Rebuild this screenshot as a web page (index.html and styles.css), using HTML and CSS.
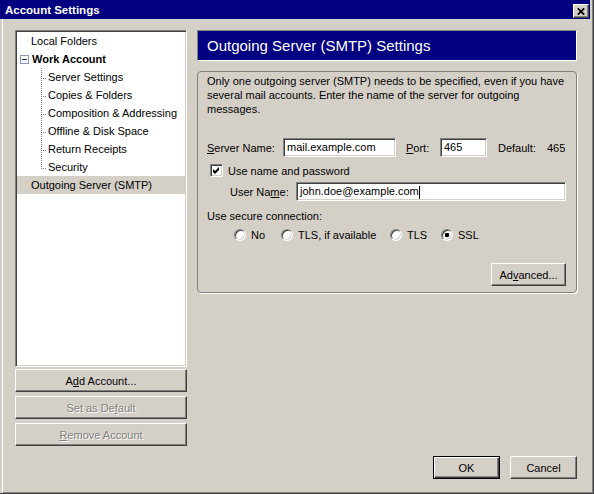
FILE: index.html
```html
<!DOCTYPE html>
<html lang="en">
<head>
	<meta charset="UTF-8">
	<title>Account Settings</title>
	<link rel="stylesheet" href="styles.css">
</head>
<body>
	<div class="window">
		<div class="titlebar">
			<span class="title">Account Settings</span>
			<span class="close"><svg width="8" height="7" viewBox="0 0 8 7"><path d="M0.8 0.3 L7.2 6.7 M7.2 0.3 L0.8 6.7" stroke="#000" stroke-width="1.7" fill="none"/></svg></span>
		</div>
		<div class="client">
			<div class="main">
				<div class="left">
					<div class="tree">
						<div class="node">Local Folders</div>
						<div class="node account"><span class="expander"></span>Work Account</div>
						<div class="children">
							<div class="child">Server Settings</div>
							<div class="child">Copies &amp; Folders</div>
							<div class="child">Composition &amp; Addressing</div>
							<div class="child">Offline &amp; Disk Space</div>
							<div class="child">Return Receipts</div>
							<div class="child last">Security</div>
						</div>
						<div class="node selected">Outgoing Server (SMTP)</div>
					</div>
					<button type="button" class="btn">A<u>d</u>d Account...</button>
					<button type="button" class="btn disabled">Set as De<u>f</u>ault</button>
					<button type="button" class="btn disabled"><u>R</u>emove Account</button>
				</div>
				<div class="right">
					<div class="header">Outgoing Server (SMTP) Settings</div>
					<div class="group">
						<div class="desc">Only one outgoing server (SMTP) needs to be specified, even if you have several mail accounts. Enter the name of the server for outgoing messages.</div>
						<div class="row server-row">
							<span class="lbl-server"><u>S</u>erver Name:</span>
							<span class="field f-server">mail.example.com</span>
							<span class="lbl-port"><u>P</u>ort:</span>
							<span class="field f-port">465</span>
							<span class="lbl-default">Default:</span>
							<span>465</span>
						</div>
						<div class="row check-row">
							<span class="checkbox"><svg width="9" height="9" viewBox="0 0 9 9"><polygon points="1,3 3,5 7,1 7,4 3,8 1,6" fill="#000"/></svg></span>
							<span>Use name and password</span>
						</div>
						<div class="row user-row">
							<span class="lbl-user">User Na<u>m</u>e:</span>
							<span class="field f-user">john.doe@example.com<span class="caret"></span></span>
						</div>
						<div class="secure">Use secure connection:</div>
						<div class="row radio-row">
							<span class="opt opt-no"><span class="radio"></span>No</span>
							<span class="opt opt-tlsa"><span class="radio"></span>TLS, if available</span>
							<span class="opt opt-tls"><span class="radio"></span>TLS</span>
							<span class="opt"><span class="radio on"></span>SSL</span>
						</div>
						<div class="row adv-row">
							<button type="button" class="btn adv">Ad<u>v</u>anced...</button>
						</div>
					</div>
				</div>
			</div>
			<div class="footer">
				<button type="button" class="btn ok">OK</button>
				<button type="button" class="btn">Cancel</button>
			</div>
		</div>
	</div>
</body>
</html>
```

FILE: styles.css
```css
body{margin:0;font-family:"Liberation Sans",Arial,sans-serif;font-size:11px;color:#000;}
u{text-decoration:underline;text-underline-offset:1px;}

.window{width:594px;height:494px;box-sizing:border-box;background:#d4d0c8;border-right:1px solid #404040;border-bottom:1px solid #404040;box-shadow:inset -1px -1px #808080;display:flex;flex-direction:column;}

.titlebar{height:19px;margin-right:3px;background:#000080;color:#fff;display:flex;justify-content:space-between;align-items:flex-start;padding:0 1px 0 5px;}
.titlebar .title{font-weight:bold;font-size:11.5px;line-height:21px;}
.titlebar .close{margin-top:4px;width:16px;height:14px;box-sizing:border-box;background:#d4d0c8;border:1px solid;border-color:#fff #404040 #404040 #fff;box-shadow:inset -1px -1px #808080;display:flex;align-items:center;justify-content:center;}

.client{flex:1;display:flex;flex-direction:column;padding:11px 16px 14px 15px;box-shadow:inset 2px 0 #d4d0c8,inset 3px 0 #fff;}
.main{display:flex;gap:10px;}

.left{width:172px;display:flex;flex-direction:column;}
.tree{height:337px;box-sizing:border-box;margin-bottom:2px;padding:1px;background:#fff;border:1px solid;border-color:#808080 #fff #fff #808080;box-shadow:inset 1px 1px #404040,inset -1px -1px #d4d0c8;}
.node{height:18px;line-height:18px;padding-left:14px;white-space:nowrap;}
.node.account{padding-left:3px;font-weight:bold;display:flex;align-items:center;}
.expander{width:9px;height:9px;box-sizing:border-box;margin-right:3px;border:1px solid #7f9db9;background:#fff linear-gradient(#1c2c6e,#1c2c6e) center/5px 1px no-repeat;}
.node.selected{background:#d4d0c8;}
.children{margin-left:24px;}
.child{height:18px;line-height:18px;white-space:nowrap;background:repeating-linear-gradient(#808080 0 1px,transparent 1px 2px) left top/1px 100% no-repeat;}
.child.last{background-size:1px 50%;}
.child::before{content:"";display:inline-block;width:6px;height:1px;margin-right:1px;vertical-align:middle;background:repeating-linear-gradient(to right,#808080 0 1px,transparent 1px 2px);}

.btn{height:23px;box-sizing:border-box;padding:0;background:#d4d0c8;border:1px solid;border-color:#fff #404040 #404040 #fff;box-shadow:inset -1px -1px #808080;font:inherit;color:#000;}
.left .btn + .btn{margin-top:4px;}
.btn.disabled{color:#808080;text-shadow:1px 1px #fff;}
.btn.ok{border-color:#000;box-shadow:inset 1px 1px #fff,inset -1px -1px #404040,inset -2px -2px #808080;}

.right{width:380px;display:flex;flex-direction:column;}
.header{height:31px;box-sizing:border-box;padding-left:9px;background:#000080;color:#fff;font-size:15px;line-height:29px;border:1px solid;border-color:#808080 #fff #fff #808080;}
.group{margin-top:10px;height:222px;box-sizing:border-box;padding:2px 10px 0 9px;border:1px solid #808080;border-radius:4px;box-shadow:1px 1px #fff;}
.desc{line-height:14px;}

.row{display:flex;align-items:center;}
.field{height:19px;box-sizing:border-box;padding:0 3px;line-height:17px;background:#fff;border:1px solid;border-color:#808080 #fff #fff #808080;box-shadow:inset 1px 1px #404040,inset -1px -1px #d4d0c8;white-space:nowrap;}
.caret{display:inline-block;width:1px;height:13px;background:#000;vertical-align:middle;}

.server-row{margin-top:22px;height:19px;}
.lbl-server{width:76px;}
.f-server{width:113px;}
.lbl-port{width:34px;margin-left:10px;}
.f-port{width:47px;}
.lbl-default{width:49px;margin-left:11px;}

.check-row{margin-top:7px;height:13px;}
.checkbox{width:13px;height:13px;box-sizing:border-box;margin:0 5px 0 3px;background:#fff;border:1px solid;border-color:#808080 #fff #fff #808080;box-shadow:inset 1px 1px #404040,inset -1px -1px #d4d0c8;display:flex;align-items:center;justify-content:center;}

.user-row{margin-top:5px;padding-left:23px;}
.lbl-user{width:66px;}
.f-user{width:270px;}

.secure{margin-top:8px;line-height:14px;}
.radio-row{margin-top:5px;height:14px;padding-left:27px;}
.opt{display:flex;align-items:center;gap:5px;white-space:nowrap;}
.opt-no{width:47px;}
.opt-tlsa{width:109px;}
.opt-tls{width:51px;}
.radio{width:12px;height:12px;box-sizing:border-box;border-radius:50%;background:#fff;border:1px solid;border-color:#808080 #fff #fff #808080;box-shadow:inset 1px 1px #404040,inset -1px -1px #d4d0c8;}
.radio.on{background:radial-gradient(circle,#000 0 2px,#fff 2.6px);}

.adv-row{margin-top:21px;justify-content:flex-end;}
.btn.adv{width:75px;}

.footer{margin-top:auto;display:flex;justify-content:flex-end;gap:10px;}
.footer .btn{width:67px;}
```
